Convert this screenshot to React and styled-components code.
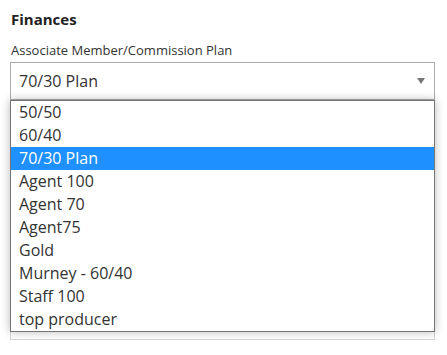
import React, { useState } from "react";
import styled, { createGlobalStyle } from "styled-components";

const GlobalStyle = createGlobalStyle`
  body {
    margin: 0;
    background: #fff;
    font-family: "Open Sans", "Liberation Sans", sans-serif;
    color: #333;
  }
`;

const StyledPage = styled.div`
  padding: 8px 12px 0 10px;
`;

const StyledHeading = styled.h3`
  margin: 0 0 0 1px;
  font-size: 15px;
  line-height: 22px;
  font-weight: 700;
  color: #222;
`;

const StyledField = styled.div`
  display: flex;
  flex-direction: column;
  margin-top: ${props => props.gap}px;
`;

const StyledLabel = styled.label`
  margin: 0 0 3px 1px;
  font-size: 13px;
  line-height: 18px;
  height: 18px;
  color: #333;
`;

const StyledSelectWrap = styled.div`
  position: relative;
`;

const StyledSelect = styled.div`
  display: flex;
  align-items: center;
  justify-content: space-between;
  height: 38px;
  box-sizing: border-box;
  padding: 0 9px 0 8px;
  border: 1px solid #ababab;
  background: #fff;
  font-size: 16px;
  color: #333;
  cursor: pointer;
`;

const StyledArrow = styled.span`
  width: 0;
  height: 0;
  margin-top: -1px;
  border-left: 4px solid transparent;
  border-right: 4px solid transparent;
  border-top: 6px solid #777;
`;

const StyledList = styled.ul`
  position: absolute;
  left: 0;
  right: 0;
  top: 38px;
  z-index: 2;
  margin: 0;
  padding: 0;
  list-style: none;
  background: #fff;
  border: 1px solid #767676;
  box-shadow: 0 0 9px rgba(0, 0, 0, 0.28);
`;

const StyledOption = styled.li`
  height: 23px;
  line-height: 23px;
  padding: 0 8px;
  font-size: 16px;
  color: ${props => (props.selected ? "#fff" : "#333")};
  background: ${props => (props.selected ? "#1e90ff" : "#fff")};
  cursor: default;
`;

const StyledInput = styled.div`
  height: 38px;
  box-sizing: border-box;
  border: 1px solid #d4d4d4;
  background: #fff;
`;

const options = [
  "50/50",
  "60/40",
  "70/30 Plan",
  "Agent 100",
  "Agent 70",
  "Agent75",
  "Gold",
  "Murney - 60/40",
  "Staff 100",
  "top producer",
];

const App = () => {
  const [value, setValue] = useState("70/30 Plan");
  const [open, setOpen] = useState(true);

  return (
    <StyledPage>
      <GlobalStyle />
      <StyledHeading>Finances</StyledHeading>

      <StyledField gap={11}>
        <StyledLabel>Associate Member/Commission Plan</StyledLabel>
        <StyledSelectWrap>
          <StyledSelect onClick={() => setOpen(prev => !prev)}>
            <span>{value}</span>
            <StyledArrow />
          </StyledSelect>
          {open && (
            <StyledList>
              {options.map(opt => (
                <StyledOption
                  key={opt}
                  selected={opt === value}
                  onClick={() => {
                    setValue(opt);
                    setOpen(false);
                  }}
                >
                  {opt}
                </StyledOption>
              ))}
            </StyledList>
          )}
        </StyledSelectWrap>
      </StyledField>

      {/* fields further down, mostly covered by the open list */}
      {[0, 1, 2].map(i => (
        <StyledField gap={21} key={i}>
          <StyledLabel />
          <StyledInput />
        </StyledField>
      ))}
    </StyledPage>
  );
};

export default App;
